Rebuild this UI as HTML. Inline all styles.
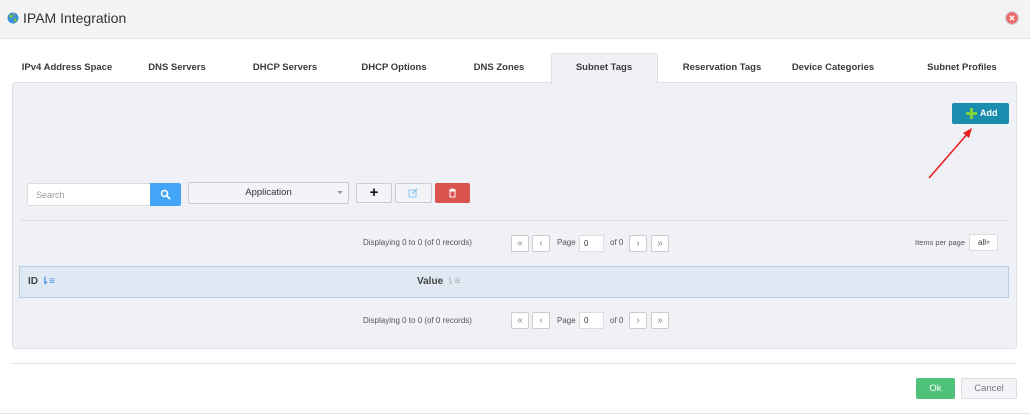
<!DOCTYPE html>
<html><head><meta charset="utf-8"><style>
*{box-sizing:border-box;margin:0;padding:0}
body{width:1030px;height:415px;overflow:hidden;background:#fff;font-family:"Liberation Sans",sans-serif;color:#333;position:relative}
.a{position:absolute}
.hdr{left:0;top:0;width:1030px;height:39px;background:#f4f4f4;border-bottom:1px solid #e6e6e6}
.tab{position:absolute;top:62px;font-size:9.5px;font-weight:bold;color:#3a3a3a;transform:translateX(-50%);white-space:nowrap}
.panel{left:12px;top:82px;width:1005px;height:267px;background:#f0f1f7;border:1px solid #dde0e6;border-radius:3px}
.btn{position:absolute;border:1px solid #ccc;border-radius:2px;background:#f3f4f8;text-align:center}
.pg{position:absolute;width:18px;height:17px;background:#fff;border:1px solid #ccc;border-radius:2px;font-size:10px;color:#888;text-align:center;line-height:15px}
.sm{position:absolute;font-size:8px;color:#555;white-space:nowrap}
</style></head><body>
<div class="a hdr"></div>
<svg class="a" style="left:7px;top:12px" width="12" height="12" viewBox="0 0 12 12"><circle cx="6" cy="6" r="5.5" fill="#3a8fd8"/><path d="M3 2.5 L6 3 L5.5 5.5 L3 6 L2 4Z M7 6 L10 7 L8.5 10 L7 9Z" fill="#7cc242"/><path d="M6 1 L8 2 L7.5 3.5Z" fill="#f2a33a"/></svg>
<div class="a" style="left:23px;top:10px;font-size:14px;color:#333">IPAM Integration</div>
<svg class="a" style="left:1005px;top:11px" width="14" height="14" viewBox="0 0 14 14"><circle cx="7" cy="7" r="6.3" fill="#e66" stroke="#ccc" stroke-width="1.2"/><path d="M4.8 4.8L9.2 9.2M9.2 4.8L4.8 9.2" stroke="#fff" stroke-width="1.4"/></svg>

<div class="a" style="left:551px;top:53px;width:107px;height:31px;background:#f0f1f7;border:1px solid #dde0e6;border-bottom:none;border-radius:3px 3px 0 0;z-index:2"></div>
<div class="a panel"></div>
<div class="tab" style="left:67px">IPv4 Address Space</div>
<div class="tab" style="left:177px">DNS Servers</div>
<div class="tab" style="left:285px">DHCP Servers</div>
<div class="tab" style="left:394px">DHCP Options</div>
<div class="tab" style="left:499px">DNS Zones</div>
<div class="tab" style="left:604px;z-index:3">Subnet Tags</div>
<div class="tab" style="left:722px">Reservation Tags</div>
<div class="tab" style="left:833px">Device Categories</div>
<div class="tab" style="left:962px">Subnet Profiles</div>

<div class="a" style="left:952px;top:103px;width:57px;height:21px;background:#1a8cad;border-radius:2px"></div>
<div class="a" style="left:980px;top:103px;color:#fff;font-size:9px;font-weight:bold;line-height:21px">Add</div>
<svg class="a" style="left:965px;top:107px" width="13" height="13" viewBox="0 0 13 13"><path d="M6.5 1V12M1 6.5H12" stroke="#7ed13f" stroke-width="3"/></svg>
<svg class="a" style="left:925px;top:124px" width="52" height="58"><path d="M4 54 L44 8" stroke="#e8201f" stroke-width="1.6"/><path d="M47 4 L38 9 L44 14Z" fill="#e8201f"/></svg>

<div class="a" style="left:27px;top:183px;width:124px;height:23px;background:#fff;border:1px solid #ddd;border-radius:2px 0 0 2px;font-size:9px;color:#999;padding:6px 8px">Search</div>
<div class="a" style="left:150px;top:183px;width:31px;height:23px;background:#42a5f5;border-radius:0 2px 2px 0"></div>
<svg class="a" style="left:160px;top:189px" width="11" height="11"><circle cx="4.5" cy="4.5" r="3" stroke="#fff" stroke-width="1.6" fill="none"/><path d="M7 7L10 10" stroke="#fff" stroke-width="1.8"/></svg>
<div class="btn" style="left:188px;top:182px;width:161px;height:22px;font-size:9.5px;line-height:19px;color:#333">Application</div>
<div class="a" style="left:337px;top:191px;border:3px solid transparent;border-top:3px solid #999"></div>
<div class="btn" style="left:356px;top:183px;width:36px;height:20px;font-size:15px;line-height:17px;font-weight:bold;color:#111">+</div>
<div class="btn" style="left:395px;top:183px;width:37px;height:20px"></div>
<svg class="a" style="left:408px;top:188px" width="10" height="10"><rect x="1" y="2" width="7" height="7" fill="none" stroke="#8cc4f2"/><path d="M4 6L9 1" stroke="#8cc4f2" stroke-width="1.3"/></svg>
<div class="a" style="left:435px;top:183px;width:35px;height:20px;background:#d9534f;border-radius:2px"></div>
<svg class="a" style="left:448px;top:188px" width="9" height="10"><path d="M1 2H8M3 1H6M2 3H7V9H2Z" stroke="#fff" fill="none" stroke-width="1"/></svg>

<div class="a" style="left:20px;top:220px;width:988px;height:1px;background:#dde0e6"></div>

<div class="sm" style="left:363px;top:238px">Displaying 0 to 0 (of 0 records)</div>
<div class="pg" style="left:511px;top:235px">«</div><div class="pg" style="left:532px;top:235px">‹</div>
<div class="sm" style="left:557px;top:238px">Page</div>
<div class="a" style="left:579px;top:235px;width:25px;height:17px;background:#fff;border:1px solid #ddd;font-size:8px;padding:3px 4px">0</div>
<div class="sm" style="left:610px;top:238px">of 0</div>
<div class="pg" style="left:629px;top:235px">›</div><div class="pg" style="left:651px;top:235px">»</div>
<div class="sm" style="left:915px;top:238px;font-size:7.5px">Items per page</div>
<div class="a" style="left:969px;top:234px;width:29px;height:17px;background:#fff;border:1px solid #ddd;font-size:8px;padding:3px 0 0 8px;color:#333">all<span style="color:#aaa">▾</span></div>

<div class="a" style="left:19px;top:266px;width:990px;height:32px;background:#dfe8f3;border:1px solid #b9cde0"></div>
<div class="a" style="left:28px;top:276px;font-size:10px;font-weight:bold;color:#444">ID <span style="color:#4a90e2">⇂≡</span></div>
<div class="a" style="left:417px;top:276px;font-size:10px;font-weight:bold;color:#444">Value <span style="color:#aaa;font-weight:normal">⇂≡</span></div>

<div class="sm" style="left:363px;top:316px">Displaying 0 to 0 (of 0 records)</div>
<div class="pg" style="left:511px;top:312px">«</div><div class="pg" style="left:532px;top:312px">‹</div>
<div class="sm" style="left:557px;top:316px">Page</div>
<div class="a" style="left:579px;top:312px;width:25px;height:17px;background:#fff;border:1px solid #ddd;font-size:8px;padding:3px 4px">0</div>
<div class="sm" style="left:610px;top:316px">of 0</div>
<div class="pg" style="left:629px;top:312px">›</div><div class="pg" style="left:651px;top:312px">»</div>

<div class="a" style="left:12px;top:363px;width:1005px;height:1px;background:#e3e3e3"></div>
<div class="a" style="left:916px;top:378px;width:39px;height:21px;background:#4fc27a;border-radius:2px;color:#fff;font-size:9.5px;text-align:center;line-height:21px">Ok</div>
<div class="btn" style="left:961px;top:378px;width:56px;height:21px;font-size:9.5px;line-height:19px;color:#777;border-color:#ddd">Cancel</div>
<div class="a" style="left:0;top:413px;width:1030px;height:1px;background:#e3e3e3"></div>
</body></html>
